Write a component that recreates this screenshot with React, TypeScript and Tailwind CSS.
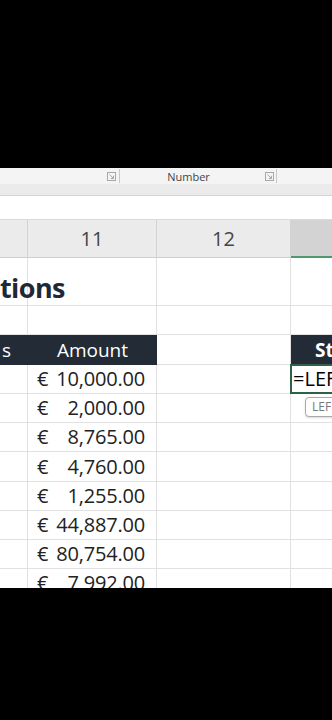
import React from 'react'

const amounts = ['10,000.00', '2,000.00', '8,765.00', '4,760.00', '1,255.00', '44,887.00', '80,754.00', '7,992.00']

function Launcher() {
  return (
    <svg width="9" height="9" viewBox="0 0 9 9" className="shrink-0">
      <rect x="0.5" y="0.5" width="8" height="8" fill="none" stroke="#a8a8a8" strokeWidth="1" />
      <path d="M2.5 2.5 L6.5 6.5 M6.5 3.8 V6.5 H3.8" fill="none" stroke="#a8a8a8" strokeWidth="1" />
    </svg>
  )
}

function Row({ h, children }: { h: string; children: React.ReactNode }) {
  return <div className={`flex ${h} shrink-0 border-b border-[#e1e1e1]`}>{children}</div>
}

export default function App() {
  const font = { fontFamily: '"Open Sans", "Liberation Sans", sans-serif' }
  return (
    <div className="w-[332px] h-[720px] bg-black flex flex-col overflow-hidden" style={font}>
      <div className="h-[168px] shrink-0" />

      <div className="h-[420px] shrink-0 bg-white flex flex-col overflow-hidden">
        {/* ribbon group labels */}
        <div className="h-[16px] shrink-0 bg-[#f4f4f4] flex items-center">
          <div className="w-[107px] shrink-0" />
          <Launcher />
          <div className="w-[3px] shrink-0" />
          <div className="w-px h-[14px] bg-[#c9c9c9] shrink-0" />
          <div className="w-[156px] shrink-0 flex items-center">
            <span className="flex-1 text-center text-[11px] text-[#444] leading-none pr-[8px]">Number</span>
            <Launcher />
            <div className="w-[2px]" />
          </div>
          <div className="w-px h-[14px] bg-[#c9c9c9] shrink-0" />
        </div>
        <div className="h-[12px] shrink-0 bg-[#ebebeb] border-b border-[#d5d5d5]" />

        {/* formula bar */}
        <div className="h-[24px] shrink-0 bg-white border-b border-[#d9d9d9]" />

        {/* column headers */}
        <div className="flex h-[38px] shrink-0 bg-[#ebebeb] text-[20px] text-[#444]">
          <div className="w-[28px] shrink-0 border-r border-[#d2d2d2] border-b border-b-[#cfcfcf]" />
          <div className="w-[129px] shrink-0 border-r border-[#d2d2d2] border-b border-b-[#cfcfcf] flex items-center justify-center">11</div>
          <div className="w-[134px] shrink-0 border-r border-[#d2d2d2] border-b border-b-[#cfcfcf] flex items-center justify-center">12</div>
          <div className="flex-1 bg-[#d3d3d3] border-b-2 border-[#4e9a6e]" />
        </div>

        {/* title row */}
        <Row h="h-[48px]">
          <div className="w-[28px] shrink-0 border-r border-[#e1e1e1] relative">
            <span className="absolute left-0 bottom-[4px] text-[27px] font-bold text-[#1f2836] whitespace-nowrap leading-none tracking-[-0.6px]">tions</span>
          </div>
          <div className="w-[129px] shrink-0 border-r border-[#e1e1e1]" />
          <div className="w-[134px] shrink-0 border-r border-[#e1e1e1]" />
          <div className="flex-1" />
        </Row>

        <Row h="h-[29px]">
          <div className="w-[28px] shrink-0 border-r border-[#e1e1e1]" />
          <div className="w-[129px] shrink-0 border-r border-[#e1e1e1]" />
          <div className="w-[134px] shrink-0 border-r border-[#e1e1e1]" />
          <div className="flex-1" />
        </Row>

        {/* table header */}
        <div className="flex h-[30px] shrink-0 text-[19px] text-white">
          <div className="w-[157px] shrink-0 bg-[#222b36] flex items-center">
            <span className="w-[28px] pl-[2px]">s</span>
            <span className="flex-1 text-center">Amount</span>
          </div>
          <div className="w-[134px] shrink-0 border-r border-[#e1e1e1] border-b border-b-[#e1e1e1]" />
          <div className="flex-1 bg-[#222b36] flex items-center pl-[24px] font-bold">St</div>
        </div>

        {/* data rows */}
        {amounts.map((a, i) => (
          <Row key={a} h={i === 3 ? 'h-[30px]' : 'h-[29px]'}>
            <div className="w-[28px] shrink-0 border-r border-[#e1e1e1]" />
            <div className="w-[129px] shrink-0 border-r border-[#e1e1e1] flex items-center pl-[9px] pr-[11px] text-[20px] text-[#222] tracking-[-0.2px]">
              <span>€</span>
              <span className="flex-1 text-right">{a}</span>
            </div>
            <div className="w-[134px] shrink-0 border-r border-[#e1e1e1]" />
            <div className="flex-1 relative">
              {i === 0 && (
                <>
                  <div className="absolute -left-px -top-px right-[-4px] -bottom-px border-2 border-[#2f6147] flex items-center pl-[1px] text-[20px] text-black">=LEF</div>
                  <div className="absolute left-[14px] top-[32px] w-[60px] h-[20px] rounded-[4px] border border-[#a9a9a9] bg-white shadow-[0_1px_2px_rgba(0,0,0,0.15)] flex items-center pl-[6px] text-[12px] text-[#777] z-10">LEF</div>
                </>
              )}
            </div>
          </Row>
        ))}
        <div className="h-[40px]" />
      </div>

      <div className="flex-1" />
    </div>
  )
}
